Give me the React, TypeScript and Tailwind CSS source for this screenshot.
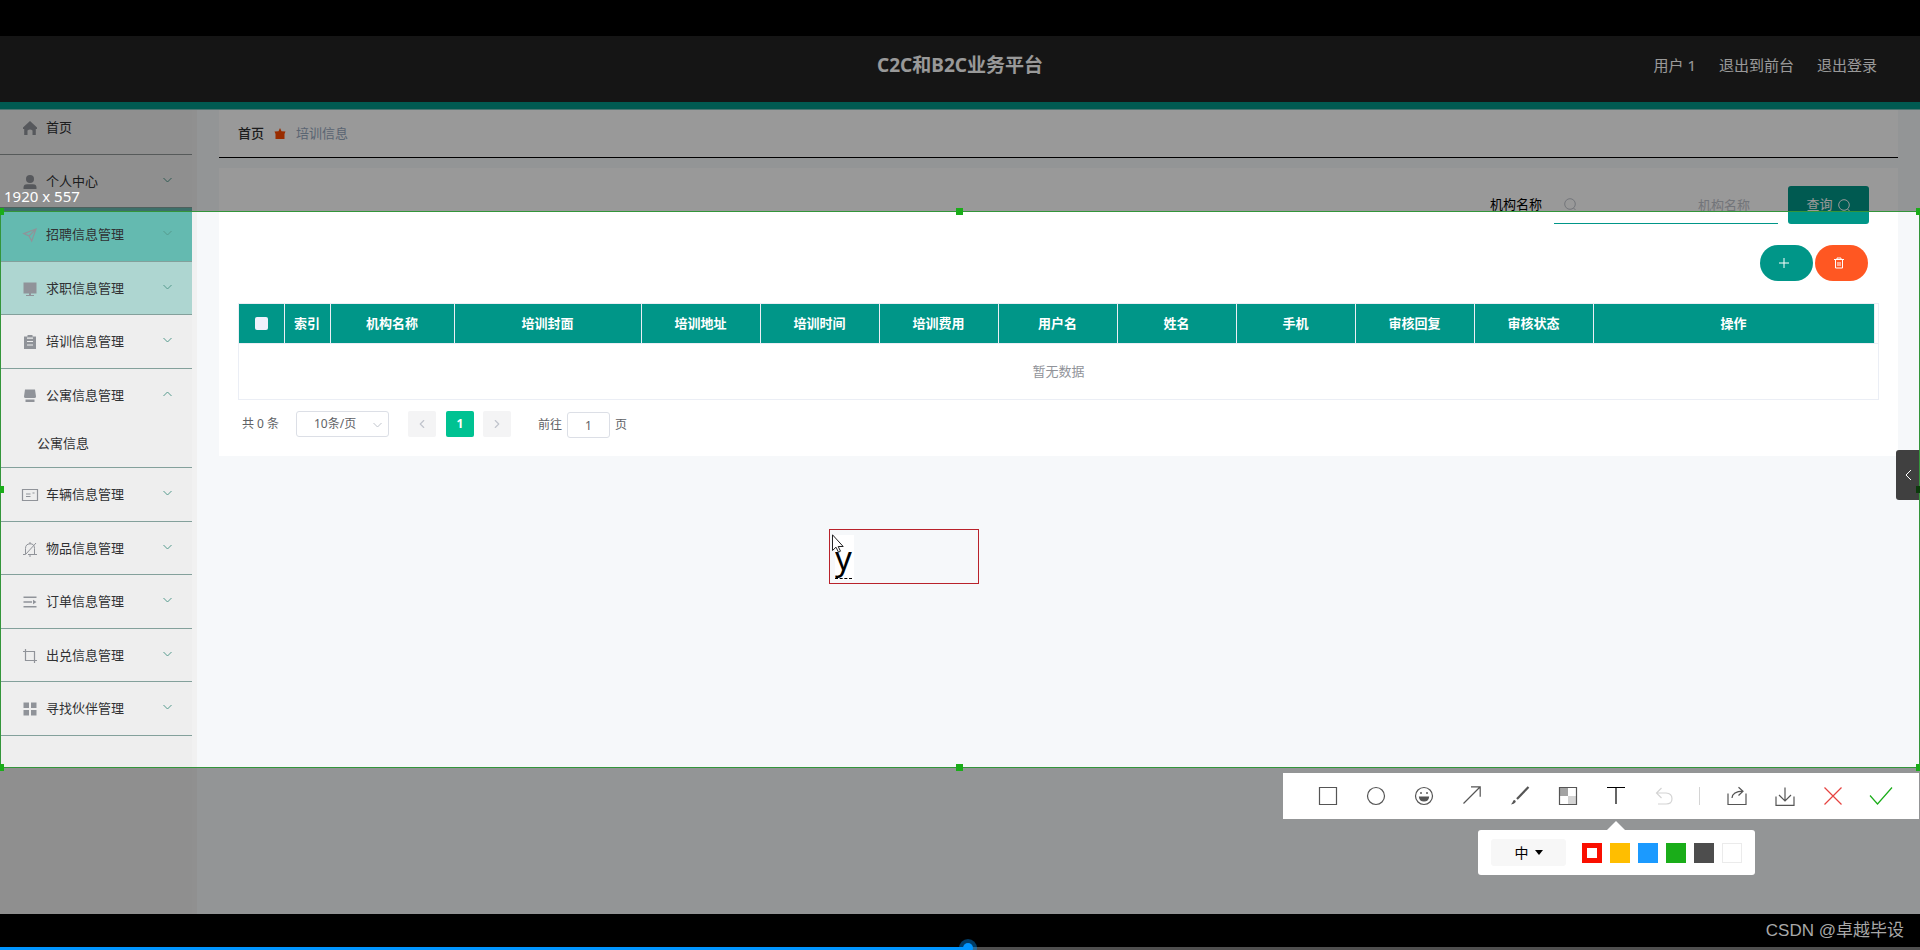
import type { ReactNode } from 'react';
import { ChevronLeft, ChevronRight } from 'lucide-react';

/** Interface for a sidebar entry */
interface MenuEntry {
  label: string;
  icon: ReactNode;
  /** Extra row classes (highlight colours) */
  tone?: string;
  children?: string[];
}

const menu: MenuEntry[] = [
  {
    label: '个人中心',
    icon: (
      <>
        <circle cx="7" cy="4" r="4" />
        <path d="M.5 12.6Q.5 9.2 4 9.2h6q3.500 0 3.500 3.400V14H.5z" />
      </>
    ),
  },
  {
    label: '招聘信息管理',
    tone: 'bg-[#64bab0]',
    icon: (
      <path d="M13 1 .8 5.600l5.200 2.400 2.700 5z M13 1 6 8" fill="none" stroke="currentColor" strokeWidth="1.200" />
    ),
  },
  {
    label: '求职信息管理',
    tone: 'bg-[#aed6d1]',
    icon: <path d="M.5.5h13v11H.5z M6 11h2v2H6z M3 13h8v1H3z" />,
  },
  {
    label: '培训信息管理',
    icon: (
      <path
        fillRule="evenodd"
        d="M1 1.500h3.500V0h5v1.500H13V14H1z M4 2.500v1.200h6V2.500z M4 6v1h6V6z M4 9.500v1h6v-1z"
      />
    ),
  },
  {
    label: '公寓信息管理',
    children: ['公寓信息'],
    icon: <path d="M2 .5h10l1 7q0 1.500-1.500 1.500H2.500Q1 9 1 7.500z M2.500 10.500h9V13h-9z" />,
  },
  {
    label: '车辆信息管理',
    icon: (
      <path
        d="M-.5 1.500h15v11h-15z M3 6h4.500 M3 8.500h4.500 M9.500 5h2"
        fill="none"
        stroke="currentColor"
        strokeWidth="1.200"
      />
    ),
  },
  {
    label: '物品信息管理',
    icon: (
      <path
        d="M2.500 12V6.500Q2.500 2 7 1.800T11.500 6.500V12 M0 12.500h2.500L13 1 M5 12.500h9 M7 0v2 M6 14h2"
        fill="none"
        stroke="currentColor"
      />
    ),
  },
  {
    label: '订单信息管理',
    icon: <path d="M.5 1.500h13V3H.5z M.5 6.200H9v1.500H.5z M.5 11h13v1.500H.5z M10 4.800l3.500 2.200L10 9.200z" />,
  },
  {
    label: '出兑信息管理',
    icon: (
      <path d="M0 2.500h11.500V14 M2.500 0v11.500H14" fill="none" stroke="currentColor" strokeWidth="1.200" />
    ),
  },
  {
    label: '寻找伙伴管理',
    icon: <path d="M.5.5H6V6H.5z M8 .5h5.500V6H8z M.5 8H6v5.500H.5z M8 8h5.500v5.500H8z" />,
  },
];

const columns = [
  { label: '索引', width: 'w-[46px]' },
  { label: '机构名称', width: 'w-[124px]' },
  { label: '培训封面', width: 'w-[187px]' },
  { label: '培训地址', width: 'w-[119px]' },
  { label: '培训时间', width: 'w-[119px]' },
  { label: '培训费用', width: 'w-[119px]' },
  { label: '用户名', width: 'w-[119px]' },
  { label: '姓名', width: 'w-[119px]' },
  { label: '手机', width: 'w-[119px]' },
  { label: '审核回复', width: 'w-[119px]' },
  { label: '审核状态', width: 'w-[119px]' },
  { label: '操作', width: '' },
];

const tools: { label: string; className?: string; icon: ReactNode }[] = [
  { label: '矩形', icon: <path d="M1.500 1.500h17v17h-17z" /> },
  { label: '椭圆', icon: <circle cx="10" cy="10" r="8.500" /> },
  {
    label: '表情',
    icon: (
      <>
        <circle cx="10" cy="10" r="8.500" />
        <path d="M5.500 11h9q-.5 4-4.500 4T5.500 11z" fill="currentColor" />
        <path d="M7 6v2 M13 6v2" strokeWidth="1.400" />
      </>
    ),
  },
  { label: '箭头', icon: <path d="M1.500 17.500 18 1 M9 .8h9.200v10" /> },
  {
    label: '画笔',
    icon: (
      <>
        <path d="M18.500 1 7 13" strokeWidth="2.200" />
        <path d="M4.500 14q2 .8 1 2.200-1.300 2-4.500 2.300l1.700-2.500Q3 14 4.500 14z" fill="currentColor" stroke="none" />
      </>
    ),
  },
  {
    label: '马赛克',
    icon: (
      <>
        <path d="M2 2h8v8H2z" fill="#a3a3a3" stroke="none" />
        <path d="M10 10h8v8h-8z" fill="#d4d4d4" stroke="none" />
        <path d="M1.500 1.500h17v17h-17z" />
      </>
    ),
  },
  { label: '文字', className: 'text-black', icon: <path d="M1 1.500h18 M10 1.500v16.500" /> },
  {
    label: '撤销',
    className: 'text-[#d4d4d4]',
    icon: <path d="M7.500 2 2.500 7l5 5 M3 7h9q6 .5 6 5.800T12 18H4" />,
  },
];

const actions: { label: string; className?: string; icon: ReactNode }[] = [
  { label: '分享', icon: <path d="M1 7.500v11h18v-11 M5 12q.5-6.500 11-6.800 M11.500 1.200l4.500 4-4.500 4.300" /> },
  { label: '保存', icon: <path d="M1 10.500v8.800h18v-8.800 M10 1.500v13.500 M4 9l6 6 6-6" /> },
  { label: '取消', className: 'text-[#e64340]', icon: <path d="M1.500 1.500l17 17 M18.500 1.500l-17 17" /> },
  { label: '完成', className: 'text-[#1aad19]', icon: <path d="M-1 9.500l7.500 8.500L21 1.500" /> },
];

const swatches = [
  { label: '黄色', tone: 'bg-[#ffbe00]' },
  { label: '蓝色', tone: 'bg-[#1b9aff]' },
  { label: '绿色', tone: 'bg-[#1aad19]' },
  { label: '深灰', tone: 'bg-[#4d4d4d]' },
  { label: '白色', tone: 'border border-[#ebebeb] bg-white' },
];

/** Thin chevron used for submenus and the page size select */
function Caret({ up = false, className = '' }: { up?: boolean; className?: string }) {
  return (
    <svg viewBox="0 0 9 6" className={`h-1.5 w-[9px] ${className}`} fill="none" stroke="currentColor">
      <path d={up ? 'M.5 5l4-4 4 4' : 'M.5 1l4 4 4-4'} />
    </svg>
  );
}

/** Magnifier with a short handle */
function SearchIcon({ className = '' }: { className?: string }) {
  return (
    <svg viewBox="0 0 13 13" className={`size-[13px] ${className}`} fill="none" stroke="currentColor">
      <circle cx="6" cy="6" r="5.300" />
      <path d="M9.500 10l2 2" />
    </svg>
  );
}

function MenuIcon({ children }: { children: ReactNode }) {
  return (
    <svg viewBox="0 0 14 14" className="size-3.5 shrink-0 overflow-visible text-[#909399]" fill="currentColor">
      {children}
    </svg>
  );
}

function Header() {
  return (
    <header className="grid h-[73px] shrink-0 grid-cols-3 items-center border-b-[7px] border-[#009688] bg-[#232323] pb-2 text-white">
      <h1 className="col-start-2 text-center text-[19px] leading-7 font-bold">C2C和B2C业务平台</h1>
      <div className="flex justify-end gap-[23px] pr-[43px] text-[15px]">
        <span>用户 1</span>
        <a href="#front">退出到前台</a>
        <a href="#logout">退出登录</a>
      </div>
    </header>
  );
}

function Sidebar() {
  return (
    <aside className="w-[197px] shrink-0 bg-[#f1f1f1] pr-[5px] text-[13px] text-[#303133]">
      <nav className="h-full bg-[#eeeeee]">
        <a href="#home" className="flex h-[45px] items-center gap-[9px] border-b border-[#8f9796] pb-2 pl-[23px]">
          <MenuIcon>
            <path d="M7 0 14 6.500V8h-1.200v6H9.500V9.500q-2.500-2-5 0V14H1.200V8H0V6.500z" />
          </MenuIcon>
          首页
        </a>
        <ul>
          {menu.map((entry) => (
            <li key={entry.label} className={`border-b border-[#83a09b] even:pb-px ${entry.tone ?? ''}`}>
              <button type="button" className="flex h-[52px] w-full items-center gap-[9px] pt-0.5 pr-5 pl-[23px]">
                <MenuIcon>{entry.icon}</MenuIcon>
                {entry.label}
                <Caret up={!!entry.children} className="mb-1 ml-auto text-[#559a8d]" />
              </button>
              {entry.children?.map((child) => (
                <a key={child} href="#apartment" className="flex h-[46px] items-center pl-[37px]">
                  {child}
                </a>
              ))}
            </li>
          ))}
        </ul>
      </nav>
    </aside>
  );
}

function DataTable() {
  return (
    <div className="border border-[#ebeef5] text-[13px]">
      <table className="w-full table-fixed border-collapse">
        <thead>
          <tr className="h-[39px] text-white">
            <th className="w-[45px] border-r border-[#ebeef5] bg-[#009688] p-0">
              <input
                type="checkbox"
                aria-label="全选"
                className="mx-auto block size-[13px] appearance-none rounded-[2px] bg-[#eef1fc]"
              />
            </th>
            {columns.map((column) => (
              <th
                key={column.label}
                className={`border-r border-[#ebeef5] bg-[#009688] p-0 font-bold ${column.width}`}
              >
                {column.label}
              </th>
            ))}
            <th className="w-1 p-0" />
          </tr>
        </thead>
        <tbody>
          <tr className="h-[56px] border-t border-[#ebeef5]">
            <td colSpan={14} className="text-center text-[#909399]">
              暂无数据
            </td>
          </tr>
        </tbody>
      </table>
    </div>
  );
}

function Pagination() {
  return (
    <div className="mt-[11px] flex h-[26px] items-center pl-1 text-xs text-[#606266]">
      <span className="w-[54px]">共 0 条</span>
      <div className="relative">
        <select
          aria-label="每页条数"
          className="h-[26px] w-[93px] appearance-none rounded-[3px] border border-[#dcdfe6] bg-white pl-[17px]"
        >
          <option>10条/页</option>
        </select>
        <Caret className="pointer-events-none absolute top-[11px] right-[7px] text-[#c0c4cc]" />
      </div>
      <button
        type="button"
        aria-label="上一页"
        className="ml-[19px] flex h-[26px] w-7 items-center justify-center rounded-[2px] bg-[#f4f4f5] text-[#c0c4cc]"
      >
        <ChevronLeft size={14} />
      </button>
      <button type="button" className="ml-2.5 h-[26px] w-7 rounded-[2px] bg-[#00c292] font-bold text-white">
        1
      </button>
      <button
        type="button"
        aria-label="下一页"
        className="ml-[9px] flex h-[26px] w-7 items-center justify-center rounded-[2px] bg-[#f4f4f5] text-[#c0c4cc]"
      >
        <ChevronRight size={14} />
      </button>
      <label className="ml-[27px] flex items-center gap-[5px] pt-0.5">
        前往
        <input
          defaultValue="1"
          className="h-[26px] w-[43px] rounded-[3px] border border-[#dcdfe6] bg-white text-center"
        />
        页
      </label>
    </div>
  );
}

function Content() {
  return (
    <main className="flex-1 bg-[#f6f8fa] px-[22px]">
      <nav aria-label="面包屑" className="flex h-12 items-center border-b border-black bg-white pl-[19px] text-[13px]">
        <a href="#home" className="font-medium text-[#303133]">
          首页
        </a>
        <svg viewBox="0 0 12 12" className="mx-2.5 size-3 text-[#ff4a00]" fill="currentColor">
          <path d="M6 0l1.500 3.300 4 .2-1 2.500v5h-9V6l-1-2.500 4-.2z" />
        </svg>
        <span className="text-[#97a8be]">培训信息</span>
      </nav>

      <section className="mt-2.5 bg-white px-[19px] pt-[18px] pb-[19px]">
        <form className="flex h-[38px] items-center justify-end pr-[10px] text-[13px]">
          <label htmlFor="org" className="mr-3 text-black">
            机构名称
          </label>
          <div className="relative mr-2.5 h-full">
            <SearchIcon className="absolute top-3 left-2.5 text-[#c0c4cc]" />
            <input
              id="org"
              placeholder="机构名称"
              className="h-full w-[224px] border-b border-[#009688] pr-7 pl-7 text-right placeholder:text-[#bfc3cb]"
            />
          </div>
          <button
            type="button"
            className="flex h-full w-[81px] items-center justify-center gap-[5px] rounded-[3px] bg-[#009688] text-white"
          >
            查询
            <SearchIcon />
          </button>
        </form>

        <div className="mt-[21px] flex justify-end gap-0.5 pr-[11px]">
          <button
            type="button"
            aria-label="新增"
            className="flex h-9 w-[53px] items-center justify-center rounded-full bg-[#009688] pr-1.5 text-white"
          >
            <svg viewBox="0 0 12 12" className="size-3" stroke="currentColor">
              <path d="M6 1v10 M1 6h10" />
            </svg>
          </button>
          <button
            type="button"
            aria-label="删除"
            className="flex h-9 w-[53px] items-center justify-center rounded-full bg-[#ff5722] pr-1.5 text-white"
          >
            <svg viewBox="0 0 12 12" className="size-3" fill="none" stroke="currentColor">
              <path d="M1 2.500h10 M4 2.500v-1.500h4v1.500 M2.500 2.500v8.500h7V2.500 M5 5v4 M7 5v4" />
            </svg>
          </button>
        </div>

        <div className="mt-[22px]">
          <DataTable />
        </div>
        <Pagination />
      </section>
    </main>
  );
}

/** Text annotation being typed on the selected area */
function Annotation() {
  return (
    <div className="absolute top-[493px] left-[829px] h-[55px] w-[150px] border border-[#b9222b] pt-[5px] pl-[5px]">
      <div className="flex h-[45px] w-[19px] flex-col items-start bg-white">
        <input
          aria-label="标注文字"
          defaultValue="y"
          className="h-[43px] w-[18px] pt-0.5 text-[33px] leading-10 text-black"
        />
        <span className="w-[17px] border-t border-dashed border-black" />
      </div>
      <svg viewBox="0 0 12 19" className="absolute top-1 left-0.5 h-[19px] w-3" fill="#fff" stroke="#222">
        <path d="M.5.800v15.700l3.500-3.300 2.500 5 2-1-2.300-4.700h5z" />
      </svg>
    </div>
  );
}

interface ToolButtonProps {
  label: string;
  className?: string;
  icon: ReactNode;
}

function ToolButton({ label, className = 'text-[#555555]', icon }: ToolButtonProps) {
  return (
    <button type="button" aria-label={label} className={className}>
      <svg viewBox="0 0 20 20" className="size-5 overflow-visible" fill="none" stroke="currentColor" strokeWidth="1.200">
        {icon}
      </svg>
    </button>
  );
}

function CaptureToolbar() {
  return (
    <div className="absolute top-[5px] right-px">
      <div className="flex h-[46px] items-center bg-white pr-7 pb-px pl-[35px]">
        <div className="flex gap-7">
          {tools.map((tool) => (
            <ToolButton key={tool.label} {...tool} />
          ))}
        </div>
        <span className="mr-[27px] ml-[25px] h-[18px] w-px bg-[#d4d4d4]" />
        <div className="flex gap-7">
          {actions.map((action) => (
            <ToolButton key={action.label} {...action} />
          ))}
        </div>
      </div>
      <svg viewBox="0 0 18 9" className="mt-0.5 ml-[324px] h-[9px] w-[18px]" fill="#fff">
        <path d="M9 0l9 9H0z" />
      </svg>
      <div className="ml-[195px] flex h-[45px] w-[277px] items-center rounded-[3px] bg-white pl-[13px]">
        <button
          type="button"
          className="mr-4 flex h-[27px] w-[75px] items-center justify-center gap-1.5 rounded-[3px] bg-[#f7f7f7] text-sm text-black"
        >
          中
          <svg viewBox="0 0 8 5" className="h-[5px] w-2" fill="currentColor">
            <path d="M0 0h8L4 5z" />
          </svg>
        </button>
        <div className="flex gap-2">
          <button type="button" aria-label="红色" className="size-5 border-[5px] border-[#fa0f00] bg-white" />
          {swatches.map((swatch) => (
            <button key={swatch.label} type="button" aria-label={swatch.label} className={`size-5 ${swatch.tone}`} />
          ))}
        </div>
      </div>
    </div>
  );
}

/** Dimmed layer with the selected region left clear */
function CaptureOverlay() {
  return (
    <div className="absolute inset-0 flex flex-col">
      <div className="flex h-[175px] shrink-0 items-end bg-black/40 pl-1">
        <span className="mb-[5px] text-[15px] leading-5 text-white">1920 x 557</span>
      </div>
      <div className="relative z-10 h-[557px] shrink-0 border border-[#33953a]">
        <span className="absolute -top-1 -left-1 size-[7px] bg-[#1aad19]" />
        <span className="absolute -top-1 left-1/2 -ml-1 size-[7px] bg-[#1aad19]" />
        <span className="absolute -top-1 -right-1 size-[7px] bg-[#1aad19]" />
        <span className="absolute top-1/2 -left-1 -mt-1 size-[7px] bg-[#1aad19]" />
        <span className="absolute top-1/2 -right-1 -mt-1 size-[7px] bg-[#0c3a0c]" />
        <span className="absolute -bottom-1 -left-1 size-[7px] bg-[#1aad19]" />
        <span className="absolute -bottom-1 left-1/2 -ml-1 size-[7px] bg-[#1aad19]" />
        <span className="absolute -right-1 -bottom-1 size-[7px] bg-[#1aad19]" />
      </div>
      <div className="relative flex-1 bg-black/40">
        <CaptureToolbar />
      </div>
    </div>
  );
}

export default function App() {
  return (
    <div className="flex min-h-screen flex-col overflow-hidden bg-black pt-9 font-['Noto_Sans','Noto_Sans_CJK_SC',sans-serif]">
      <div className="relative flex flex-1 flex-col overflow-hidden">
        <Header />
        <div className="flex flex-1 border-t border-[#7fc4bd]">
          <Sidebar />
          <Content />
        </div>
        <button
          type="button"
          aria-label="展开侧栏"
          className="absolute top-[414px] right-0 flex h-[50px] w-6 items-center justify-center rounded-l-[3px] bg-[#404040] text-white"
        >
          <svg viewBox="0 0 7 12" className="h-3 w-[7px]" fill="none" stroke="currentColor">
            <path d="M6 1 1 6l5 5" />
          </svg>
        </button>
        <CaptureOverlay />
        <Annotation />
      </div>

      <footer className="relative flex h-9 shrink-0 flex-col justify-between">
        <p className="pt-[5px] pr-4 text-right font-['Liberation_Sans','Noto_Sans_CJK_SC',sans-serif] text-[17px] leading-6 text-[#a8a8a8]">
          CSDN @卓越毕设
        </p>
        <div className="h-[3px] bg-[#4f4f4f]">
          <div className="h-full w-[50.4%] bg-[#0095ff]" />
        </div>
        <span className="absolute -bottom-[7px] left-[50.4%] -ml-[9px] flex size-[18px] items-center justify-center rounded-full bg-[#0095ff]/40">
          <span className="size-2.5 rounded-full bg-[#0095ff]" />
        </span>
        <input
          type="range"
          aria-label="播放进度"
          defaultValue={50}
          className="absolute bottom-0 left-0 h-[3px] w-full opacity-0"
        />
      </footer>
    </div>
  );
}
